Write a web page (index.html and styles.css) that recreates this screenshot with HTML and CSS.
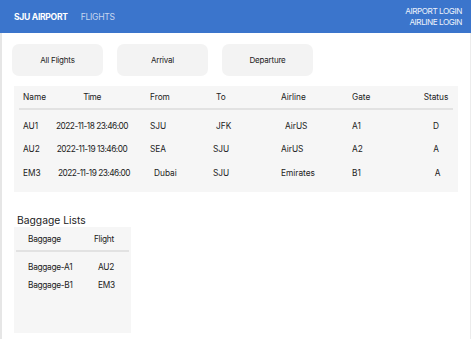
FILE: index.html
```html
<!DOCTYPE html>
<html>
  <head>
    <meta name="viewport" content="width=device-width, initial-scale=1" />
    <title>SJU Airport</title>
    <link rel="stylesheet" href="styles.css">
  </head>

  <body>
    <div id="topbar">
      <div class="brand">
        <span class="logo">SJU AIRPORT</span>
        <span class="nav">FLIGHTS</span>
      </div>
      <div class="logins">
        <span>AIRPORT LOGIN</span>
        <span>AIRLINE LOGIN</span>
      </div>
    </div>

    <div id="content">
      <div id="filters">
        <button class="filter">All Flights</button>
        <button class="filter">Arrival</button>
        <button class="filter">Departure</button>
      </div>

      <div id="flights" class="panel">
        <div class="row head">
          <span>Name</span>
          <span class="c-time">Time</span>
          <span class="c-from">From</span>
          <span>To</span>
          <span>Airline</span>
          <span>Gate</span>
          <span class="c-status">Status</span>
        </div>
        <div class="row">
          <span>AU1</span>
          <span class="c-time">2022-11-18 23:46:00</span>
          <span class="c-from">SJU</span>
          <span>JFK</span>
          <span class="nudge">AirUS</span>
          <span>A1</span>
          <span class="c-status">D</span>
        </div>
        <div class="row">
          <span>AU2</span>
          <span class="c-time">2022-11-19 13:46:00</span>
          <span class="c-from">SEA</span>
          <span class="pull">SJU</span>
          <span>AirUS</span>
          <span>A2</span>
          <span class="c-status">A</span>
        </div>
        <div class="row">
          <span>EM3</span>
          <span class="c-time nudge">2022-11-19 23:46:00</span>
          <span class="c-from nudge">Dubai</span>
          <span class="pull">SJU</span>
          <span>Emirates</span>
          <span>B1</span>
          <span class="c-status nudge">A</span>
        </div>
      </div>

      <h2 class="section-title">Baggage Lists</h2>
      <div id="baggage" class="panel">
        <div class="brow head">
          <span>Baggage</span>
          <span>Flight</span>
        </div>
        <div class="brow">
          <span>Baggage-A1</span>
          <span class="b-flight">AU2</span>
        </div>
        <div class="brow">
          <span>Baggage-B1</span>
          <span class="b-flight">EM3</span>
        </div>
      </div>
    </div>
  </body>
</html>
```

FILE: styles.css
```css
* {
  box-sizing: border-box;
}

body {
  margin: 0;
  width: 471px;
  font-family: Inter, "Noto Sans", sans-serif;
  color: #222;
  background-color: white;
}

/* Blue app bar */
#topbar {
  height: 33px;
  background-color: #3b75cc;
  display: flex;
  align-items: center;
  justify-content: space-between;
  padding: 0 9px 0 14px;
  color: white;
  font-size: 8.2px;
}

.brand {
  display: flex;
  gap: 13px;
  font-size: 8.6px;
  letter-spacing: -0.3px;
}

.logo {
  font-weight: 700;
}

.nav {
  color: rgba(255, 255, 255, 0.72);
}

.logins {
  display: flex;
  flex-direction: column;
  align-items: flex-end;
  line-height: 11px;
  letter-spacing: -0.45px;
  color: #edf2fb;
}

#content {
  min-height: 306px;
  border-left: 2px solid #e6e6e6;
  border-right: 1px solid #ececec;
}

/* Filter buttons */
#filters {
  display: flex;
  gap: 14px;
  padding: 11px 0 0 10px;
}

.filter {
  width: 91px;
  height: 32px;
  border: none;
  border-radius: 7px;
  background-color: #f3f3f3;
  font-family: inherit;
  font-size: 8px;
  letter-spacing: -0.2px;
  color: #222;
}

.panel {
  background-color: #f6f6f6;
  font-size: 8.3px;
}

/* Flights table */
#flights {
  margin: 10px 0 0 12px;
  width: 444px;
  height: 106px;
  padding: 0 5px;
}

.row {
  display: grid;
  grid-template-columns: 33px 72px 88px 65px 71px 62px 44px;
  height: 23.5px;
  align-items: center;
  padding-left: 4px;
}

.row.head {
  height: 24px;
  border-bottom: 2px solid #e2e2e2;
  margin-bottom: 4px;
}

.c-time {
  text-align: center;
  white-space: nowrap;
  letter-spacing: -0.5px;
}

.c-from {
  padding-left: 22px;
}

.c-status {
  text-align: center;
}

.nudge {
  padding-left: 4px;
}

.c-time.nudge {
  padding-left: 2px;
}

.c-status.nudge {
  padding-left: 3px;
}

.c-from.nudge {
  padding-left: 26px;
}

.pull {
  margin-left: -3px;
}

/* Baggage */
.section-title {
  margin: 21px 0 0 15px;
  font-size: 10.3px;
  font-weight: 400;
  line-height: 14px;
}

#baggage {
  margin: 0 0 0 12px;
  width: 117px;
  height: 106px;
  padding: 0 2px;
  letter-spacing: -0.3px;
}

.brow {
  display: grid;
  grid-template-columns: 66px 40px;
  padding-left: 12px;
  height: 18px;
  align-items: center;
}

.brow.head {
  height: 25px;
  border-bottom: 2px solid #e2e2e2;
  margin-bottom: 6px;
}

.b-flight {
  padding-left: 4px;
}
```
